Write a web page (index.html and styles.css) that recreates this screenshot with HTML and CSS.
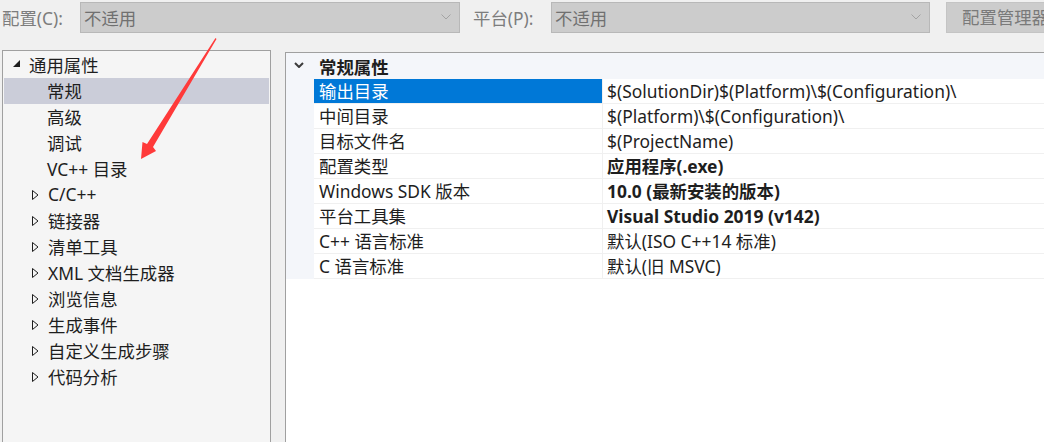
FILE: index.html
```html
<!DOCTYPE html>
<html lang="zh-CN">
<head>
    <meta charset="UTF-8">
    <title>属性页</title>
    <link rel="stylesheet" href="styles.css">
</head>
<body>
    <!-- Configuration bar -->
    <div class="toolbar">
        <span class="bar-label">配置(C):</span>
        <div class="combo combo-config">
            <span>不适用</span>
            <svg class="combo-arrow" width="10" height="6" viewBox="0 0 10 6"><path d="M0.5 0.5 L5 5 L9.5 0.5" fill="none" stroke="#a3a3a3" stroke-width="1"/></svg>
        </div>
        <span class="bar-label platform-label">平台(P):</span>
        <div class="combo combo-platform">
            <span>不适用</span>
            <svg class="combo-arrow" width="10" height="6" viewBox="0 0 10 6"><path d="M0.5 0.5 L5 5 L9.5 0.5" fill="none" stroke="#a3a3a3" stroke-width="1"/></svg>
        </div>
        <div class="bar-button">配置管理器(O)...</div>
    </div>

    <div class="main">
        <!-- Tree of property pages -->
        <div class="tree-panel">
            <div class="tree-row">
                <svg class="tri-open" width="8" height="8" viewBox="0 0 8 8"><path d="M7 0 L7 7 L0 7 Z" fill="#1e1e1e"/></svg>
                <span>通用属性</span>
            </div>
            <div class="tree-row child selected"><span>常规</span></div>
            <div class="tree-row child"><span>高级</span></div>
            <div class="tree-row child"><span>调试</span></div>
            <div class="tree-row child"><span>VC++ 目录</span></div>
            <div class="tree-row group"><svg class="tri-closed" width="7" height="10" viewBox="0 0 7 10"><path d="M0.5 0.5 L6 5 L0.5 9.5 Z" fill="none" stroke="#1e1e1e" stroke-width="1"/></svg><span>C/C++</span></div>
            <div class="tree-row group"><svg class="tri-closed" width="7" height="10" viewBox="0 0 7 10"><path d="M0.5 0.5 L6 5 L0.5 9.5 Z" fill="none" stroke="#1e1e1e" stroke-width="1"/></svg><span>链接器</span></div>
            <div class="tree-row group"><svg class="tri-closed" width="7" height="10" viewBox="0 0 7 10"><path d="M0.5 0.5 L6 5 L0.5 9.5 Z" fill="none" stroke="#1e1e1e" stroke-width="1"/></svg><span>清单工具</span></div>
            <div class="tree-row group"><svg class="tri-closed" width="7" height="10" viewBox="0 0 7 10"><path d="M0.5 0.5 L6 5 L0.5 9.5 Z" fill="none" stroke="#1e1e1e" stroke-width="1"/></svg><span>XML 文档生成器</span></div>
            <div class="tree-row group"><svg class="tri-closed" width="7" height="10" viewBox="0 0 7 10"><path d="M0.5 0.5 L6 5 L0.5 9.5 Z" fill="none" stroke="#1e1e1e" stroke-width="1"/></svg><span>浏览信息</span></div>
            <div class="tree-row group"><svg class="tri-closed" width="7" height="10" viewBox="0 0 7 10"><path d="M0.5 0.5 L6 5 L0.5 9.5 Z" fill="none" stroke="#1e1e1e" stroke-width="1"/></svg><span>生成事件</span></div>
            <div class="tree-row group"><svg class="tri-closed" width="7" height="10" viewBox="0 0 7 10"><path d="M0.5 0.5 L6 5 L0.5 9.5 Z" fill="none" stroke="#1e1e1e" stroke-width="1"/></svg><span>自定义生成步骤</span></div>
            <div class="tree-row group"><svg class="tri-closed" width="7" height="10" viewBox="0 0 7 10"><path d="M0.5 0.5 L6 5 L0.5 9.5 Z" fill="none" stroke="#1e1e1e" stroke-width="1"/></svg><span>代码分析</span></div>
        </div>

        <!-- Property grid -->
        <div class="grid-panel">
            <div class="grid-header">
                <svg class="chevron" width="10" height="6" viewBox="0 0 10 6"><path d="M1 1 L5 5 L9 1" fill="none" stroke="#3c3c3c" stroke-width="2"/></svg>
                <span>常规属性</span>
            </div>
            <div class="grid-row selected">
                <div class="gutter"></div>
                <div class="prop-name">输出目录</div>
                <div class="prop-value">$(SolutionDir)$(Platform)\$(Configuration)\</div>
            </div>
            <div class="grid-row">
                <div class="gutter"></div>
                <div class="prop-name">中间目录</div>
                <div class="prop-value">$(Platform)\$(Configuration)\</div>
            </div>
            <div class="grid-row">
                <div class="gutter"></div>
                <div class="prop-name">目标文件名</div>
                <div class="prop-value">$(ProjectName)</div>
            </div>
            <div class="grid-row">
                <div class="gutter"></div>
                <div class="prop-name">配置类型</div>
                <div class="prop-value bold">应用程序(.exe)</div>
            </div>
            <div class="grid-row">
                <div class="gutter"></div>
                <div class="prop-name">Windows SDK 版本</div>
                <div class="prop-value bold">10.0 (最新安装的版本)</div>
            </div>
            <div class="grid-row">
                <div class="gutter"></div>
                <div class="prop-name">平台工具集</div>
                <div class="prop-value bold">Visual Studio 2019 (v142)</div>
            </div>
            <div class="grid-row">
                <div class="gutter"></div>
                <div class="prop-name">C++ 语言标准</div>
                <div class="prop-value">默认(ISO C++14 标准)</div>
            </div>
            <div class="grid-row">
                <div class="gutter"></div>
                <div class="prop-name">C 语言标准</div>
                <div class="prop-value">默认(旧 MSVC)</div>
            </div>
        </div>
    </div>

    <!-- Red annotation arrow -->
    <svg class="annotation" width="1044" height="442" viewBox="0 0 1044 442">
        <path d="M215.5 38 L216.5 39 L153 147 L156 151 L141 159 L142.5 142 L147 144 Z" fill="#ff3a3a"/>
    </svg>
</body>
</html>
```

FILE: styles.css
```css
body {
    margin: 0;
    background-color: #f0f0f0;
    font-family: "Noto Sans", "Noto Sans CJK SC", sans-serif;
    font-size: 17.4px;
    color: #1e1e1e;
    width: 1044px;
    height: 442px;
    overflow: hidden;
    position: relative;
}
.toolbar {
    display: flex;
    align-items: center;
    height: 30px;
    padding-top: 2px;
    white-space: nowrap;
}
.toolbar > * {
    flex-shrink: 0;
}
.bar-label {
    box-sizing: border-box;
    color: #7d7d7d;
    width: 80px;
    padding-left: 2px;
}
.platform-label {
    margin-left: 13px;
    width: 78px;
    padding-left: 0;
}
.combo {
    display: flex;
    align-items: center;
    justify-content: space-between;
    box-sizing: border-box;
    height: 31px;
    background-color: #cccccc;
    border: 1px solid #b8b8b8;
    color: #707070;
    padding: 0 8px 0 3px;
}
.combo-config {
    width: 380px;
}
.combo-platform {
    width: 379px;
}
.bar-button {
    box-sizing: border-box;
    height: 31px;
    margin-left: 16px;
    padding: 0 15px;
    background-color: #cccccc;
    border: 1px solid #c4c4c4;
    color: #7a7a7a;
    line-height: 29px;
}
.main {
    display: flex;
    align-items: flex-start;
    padding: 18px 0 0 2px;
}
.tree-panel {
    box-sizing: border-box;
    flex-shrink: 0;
    width: 269px;
    height: 400px;
    background-color: #f5f5f5;
    border: 1px solid #a0a0a0;
    padding: 1px;
}
.tree-row {
    display: flex;
    align-items: center;
    height: 26px;
    white-space: nowrap;
}
.tree-row span {
    margin-top: -2px;
}
.tree-row .tri-open {
    margin: 0 8px 2px 9px;
}
.tree-row.child {
    padding-left: 43px;
}
.tree-row.group {
    padding-left: 28px;
}
.tree-row.group .tri-closed {
    margin-right: 9px;
}
.tree-row.selected {
    background-color: #cbcdd9;
}
.grid-panel {
    box-sizing: border-box;
    flex: 1;
    height: 400px;
    margin: 2px 0 0 14px;
    background-color: #ffffff;
    border-top: 1px solid #a0a0a0;
    border-left: 1px solid #a0a0a0;
}
.grid-header {
    display: flex;
    align-items: center;
    height: 26px;
    background-color: #f4f6fa;
    font-weight: bold;
    white-space: nowrap;
}
.grid-header .chevron {
    margin: 0 15px 2px 8px;
}
.grid-row {
    display: flex;
    height: 25px;
    white-space: nowrap;
}
.gutter {
    width: 28px;
    background-color: #f4f6fa;
}
.prop-name {
    box-sizing: border-box;
    width: 289px;
    padding-left: 5px;
    line-height: 24px;
    border-bottom: 1px solid #f0f0f0;
    border-right: 1px solid #f0f0f0;
}
.prop-value {
    flex: 1;
    padding-left: 4px;
    line-height: 24px;
    border-bottom: 1px solid #f0f0f0;
}
.prop-value.bold {
    font-weight: bold;
}
.grid-row.selected .prop-name {
    background-color: #0078d7;
    color: #ffffff;
}
.annotation {
    position: absolute;
    left: 0;
    top: 0;
    pointer-events: none;
}
```
